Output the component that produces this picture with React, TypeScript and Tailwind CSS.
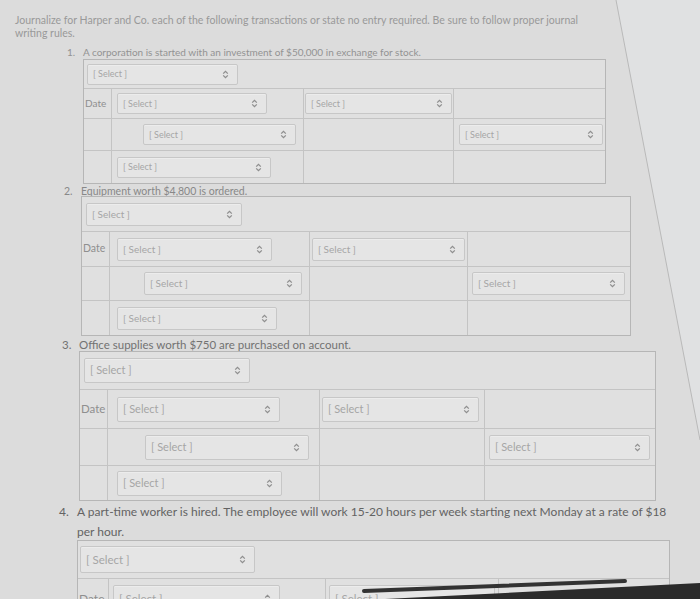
import React from 'react'

type Cfg = {
  num: string
  text: React.ReactNode
  wrap: string
  numCls: string
  labelCls: string
  table: string
  cols: string
  rows: string[]
  font: string
  date: string
  selH: string
  r1: string
  r2: string
  c3: string
  r3: string
  c4: string
  r4: string
}

const sections: Cfg[] = [
  {
    num: '1.',
    text: 'A corporation is started with an investment of $50,000 in exchange for stock.',
    wrap: 'ml-[67px] mt-[6px]',
    numCls: 'w-[16px] text-[10px] leading-[12px] text-[#939393]',
    labelCls: 'text-[10px] leading-[12px] text-[#939393]',
    table: 'w-[523px] mt-[1px]',
    cols: 'grid-cols-[28px_192px_150px_1fr]',
    rows: ['h-[29px]', 'h-[30px]', 'h-[32px]', 'h-[32px]'],
    font: 'text-[9px]',
    date: 'text-[10px]',
    selH: 'h-[21px]',
    r1: 'ml-[3px] w-[151px]',
    r2: 'ml-[5px] w-[150px]',
    c3: 'mx-[1px] w-full',
    r3: 'ml-[31px] w-[153px]',
    c4: 'ml-[5px] mr-[2px] w-full',
    r4: 'ml-[5px] w-[154px]',
  },
  {
    num: '2.',
    text: 'Equipment worth $4,800 is ordered.',
    wrap: 'ml-[64px] mt-[2px]',
    numCls: 'w-[17px] text-[10.5px] leading-[10px] text-[#888]',
    labelCls: 'text-[10.5px] leading-[10px] text-[#888]',
    table: 'w-[550px] mt-[0px]',
    cols: 'grid-cols-[28px_200px_158px_1fr]',
    rows: ['h-[35px]', 'h-[35px]', 'h-[34px]', 'h-[34px]'],
    font: 'text-[10px]',
    date: 'text-[10.5px]',
    selH: 'h-[23px]',
    r1: 'ml-[4px] w-[156px]',
    r2: 'ml-[7px] w-[155px]',
    c3: 'mx-[2px] w-full',
    r3: 'ml-[34px] w-[158px]',
    c4: 'ml-[4px] mr-[5px] w-full',
    r4: 'ml-[7px] w-[160px]',
  },
  {
    num: '3.',
    text: 'Office supplies worth $750 are purchased on account.',
    wrap: 'ml-[62px] mt-[3px]',
    numCls: 'w-[17px] text-[11.5px] leading-[12px] text-[#727272]',
    labelCls: 'text-[11.5px] leading-[12px] text-[#727272]',
    table: 'w-[577px] mt-[0px]',
    cols: 'grid-cols-[28px_212px_165px_1fr]',
    rows: ['h-[38px]', 'h-[39px]', 'h-[37px]', 'h-[34px]'],
    font: 'text-[11px]',
    date: 'text-[11.5px]',
    selH: 'h-[25px]',
    r1: 'ml-[4px] w-[166px]',
    r2: 'ml-[9px] w-[163px]',
    c3: 'ml-[2px] mr-[5px] w-full',
    r3: 'ml-[37px] w-[164px]',
    c4: 'ml-[4px] mr-[5px] w-full',
    r4: 'ml-[9px] w-[165px]',
  },
  {
    num: '4.',
    text: (
      <>
        A part-time worker is hired. The employee will work 15-20 hours per week starting next Monday at a rate of $18
        <br />
        per hour.
      </>
    ),
    wrap: 'ml-[59px] mt-[1px]',
    numCls: 'w-[18px] text-[12px] leading-[20px] text-[#636363]',
    labelCls: 'text-[12px] leading-[20px] text-[#636363] whitespace-nowrap',
    table: 'w-[593px] mt-[-2px]',
    cols: 'grid-cols-[31px_217px_173px_1fr]',
    rows: ['h-[38px]', 'h-[40px]', 'h-[40px]', 'h-[40px]'],
    font: 'text-[11.5px]',
    date: 'text-[12px]',
    selH: 'h-[27px]',
    r1: 'ml-[2px] w-[175px]',
    r2: 'ml-[4px] w-[167px]',
    c3: 'ml-[3px] mr-[3px] w-full',
    r3: 'ml-[38px] w-[168px]',
    c4: 'ml-[4px] mr-[5px] w-full',
    r4: 'ml-[4px] w-[168px]',
  },
]

const Arrows = () => (
  <svg width="7" height="9" viewBox="0 0 7 9" className="shrink-0">
    <path d="M1.2 3.6 L3.5 1.3 L5.8 3.6 M1.2 5.4 L3.5 7.7 L5.8 5.4" fill="none" stroke="#8f8f8f" strokeWidth="1.3" />
  </svg>
)

const Select = ({ cls, h, font }: { cls: string; h: string; font: string }) => (
  <div
    className={`${cls} ${h} ${font} flex items-center justify-between border border-[#c7c7c7] bg-[#e5e5e5] rounded-[2px] pl-[5px] pr-[8px] text-[#a6a6a6] shadow-[inset_0_1px_0_#ececec]`}
  >
    <span>[ Select ]</span>
    <Arrows />
  </div>
)

const Section = ({ c }: { c: Cfg }) => {
  const cell = 'flex items-center border-[#c4c4c4]'
  return (
    <div className={`flex ${c.wrap}`}>
      <span className={c.numCls}>{c.num}</span>
      <div className="flex flex-col">
        <p className={c.labelCls}>{c.text}</p>
        <div className={`${c.table} border border-[#b6b6b6] bg-[#e0e0e0]`}>
          <div className={`${c.rows[0]} flex items-center border-b border-[#c4c4c4]`}>
            <Select cls={c.r1} h={c.selH} font={c.font} />
          </div>
          <div className={`grid ${c.cols}`}>
            {/* debit line */}
            <div className={`${c.rows[1]} ${cell} border-r border-b ${c.date} text-[#8f8f8f] pl-[1px]`}>Date</div>
            <div className={`${cell} border-r border-b`}>
              <Select cls={c.r2} h={c.selH} font={c.font} />
            </div>
            <div className={`${cell} border-r border-b`}>
              <Select cls={c.c3} h={c.selH} font={c.font} />
            </div>
            <div className={`${cell} border-b`} />
            {/* credit line */}
            <div className={`${c.rows[2]} ${cell} border-r border-b`} />
            <div className={`${cell} border-r border-b`}>
              <Select cls={c.r3} h={c.selH} font={c.font} />
            </div>
            <div className={`${cell} border-r border-b`} />
            <div className={`${cell} border-b`}>
              <Select cls={c.c4} h={c.selH} font={c.font} />
            </div>
            {/* explanation */}
            <div className={`${c.rows[3]} ${cell} border-r`} />
            <div className={`${cell} border-r`}>
              <Select cls={c.r4} h={c.selH} font={c.font} />
            </div>
            <div className={`${cell} border-r`} />
            <div className={cell} />
          </div>
        </div>
      </div>
    </div>
  )
}

export default function App() {
  return (
    <div className="relative w-[700px] h-[599px] overflow-hidden bg-[#dcdcdc] font-['Lato','Noto_Sans',sans-serif]">
      <p className="pl-[15px] pt-[14px] text-[10.5px] leading-[13px] text-[#999] whitespace-nowrap">
        Journalize for Harper and Co. each of the following transactions or state no entry required. Be sure to follow proper journal
        <br />
        writing rules.
      </p>
      {sections.map((s) => (
        <Section key={s.num} c={s} />
      ))}

      {/* photo artefacts: page edge, pen and bezel */}
      <svg className="pointer-events-none absolute inset-0" width="700" height="599" viewBox="0 0 700 599">
        <polygon points="616,0 700,0 700,440" fill="#e3e4e6" opacity="0.6" />
        <line x1="616" y1="0" x2="700" y2="440" stroke="#b9b9b9" strokeWidth="1" />
        <polygon points="385,599 700,583 700,599" fill="#2b2b2b" />
        <line x1="364" y1="591" x2="625" y2="581" stroke="#333" strokeWidth="4" strokeLinecap="round" />
      </svg>
    </div>
  )
}
